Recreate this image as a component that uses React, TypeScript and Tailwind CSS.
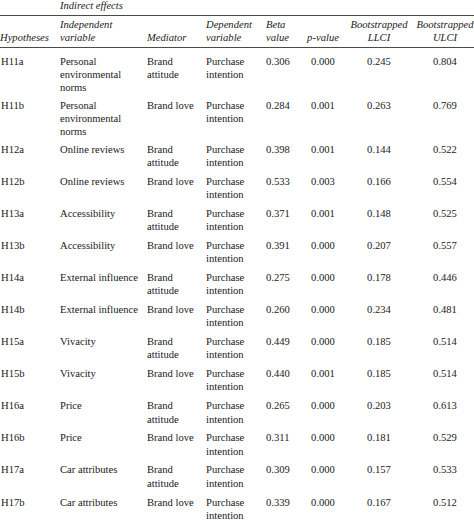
import React from 'react';

type Row = { id: string; iv: string; med: string; beta: string; p: string; llci: string; ulci: string; tall?: boolean };

const rows: Row[] = [
  { id: 'H11a', iv: 'Personal\nenvironmental\nnorms', med: 'Brand\nattitude', beta: '0.306', p: '0.000', llci: '0.245', ulci: '0.804', tall: true },
  { id: 'H11b', iv: 'Personal\nenvironmental\nnorms', med: 'Brand love', beta: '0.284', p: '0.001', llci: '0.263', ulci: '0.769', tall: true },
  { id: 'H12a', iv: 'Online reviews', med: 'Brand\nattitude', beta: '0.398', p: '0.001', llci: '0.144', ulci: '0.522' },
  { id: 'H12b', iv: 'Online reviews', med: 'Brand love', beta: '0.533', p: '0.003', llci: '0.166', ulci: '0.554' },
  { id: 'H13a', iv: 'Accessibility', med: 'Brand\nattitude', beta: '0.371', p: '0.001', llci: '0.148', ulci: '0.525' },
  { id: 'H13b', iv: 'Accessibility', med: 'Brand love', beta: '0.391', p: '0.000', llci: '0.207', ulci: '0.557' },
  { id: 'H14a', iv: 'External influence', med: 'Brand\nattitude', beta: '0.275', p: '0.000', llci: '0.178', ulci: '0.446' },
  { id: 'H14b', iv: 'External influence', med: 'Brand love', beta: '0.260', p: '0.000', llci: '0.234', ulci: '0.481' },
  { id: 'H15a', iv: 'Vivacity', med: 'Brand\nattitude', beta: '0.449', p: '0.000', llci: '0.185', ulci: '0.514' },
  { id: 'H15b', iv: 'Vivacity', med: 'Brand love', beta: '0.440', p: '0.001', llci: '0.185', ulci: '0.514' },
  { id: 'H16a', iv: 'Price', med: 'Brand\nattitude', beta: '0.265', p: '0.000', llci: '0.203', ulci: '0.613' },
  { id: 'H16b', iv: 'Price', med: 'Brand love', beta: '0.311', p: '0.000', llci: '0.181', ulci: '0.529' },
  { id: 'H17a', iv: 'Car attributes', med: 'Brand\nattitude', beta: '0.309', p: '0.000', llci: '0.157', ulci: '0.533' },
  { id: 'H17b', iv: 'Car attributes', med: 'Brand love', beta: '0.339', p: '0.000', llci: '0.167', ulci: '0.512' },
];

const App: React.FC = () => {
  return (
    <div className="w-[474px] h-[521px] overflow-hidden bg-white text-[#1a1a1a] text-[10.6px] leading-[13.3px] whitespace-pre-line" style={{ fontFamily: '"Liberation Serif", "Times New Roman", serif' }}>
      <div className="w-[478px]">
        {/* caption row */}
        <div className="flex h-[14.5px] leading-[11px] italic">
          <div className="w-[60px] shrink-0"></div>
          <div>Indirect effects</div>
        </div>

        {/* column headings */}
        <div className="flex h-[33px] items-end pb-[2px] italic border-t-[1.5px] border-b border-[#4a4a4a]">
          <div className="w-[60px] shrink-0">Hypotheses</div>
          <div className="w-[87px] shrink-0">{'Independent\nvariable'}</div>
          <div className="w-[59px] shrink-0">Mediator</div>
          <div className="w-[60px] shrink-0">{'Dependent\nvariable'}</div>
          <div className="w-[34px] shrink-0">{'Beta\nvalue'}</div>
          <div className="w-[46px] shrink-0 text-center">p-value</div>
          <div className="w-[66px] shrink-0 text-center">{'Bootstrapped\nLLCI'}</div>
          <div className="w-[66px] shrink-0 text-center">{'Bootstrapped\nULCI'}</div>
        </div>

        {rows.map((r) => (
          <div key={r.id} className={`flex items-start pt-[7px] ${r.tall ? 'h-[44px]' : 'h-[32.1px]'}`}>
            <div className="w-[60px] shrink-0 pl-[1px]">{r.id}</div>
            <div className="w-[87px] shrink-0">{r.iv}</div>
            <div className="w-[59px] shrink-0">{r.med}</div>
            <div className="w-[60px] shrink-0">{'Purchase\nintention'}</div>
            <div className="w-[34px] shrink-0">{r.beta}</div>
            <div className="w-[46px] shrink-0 text-center">{r.p}</div>
            <div className="w-[66px] shrink-0 text-center">{r.llci}</div>
            <div className="w-[66px] shrink-0 text-center">{r.ulci}</div>
          </div>
        ))}
      </div>
    </div>
  );
};

export default App;
